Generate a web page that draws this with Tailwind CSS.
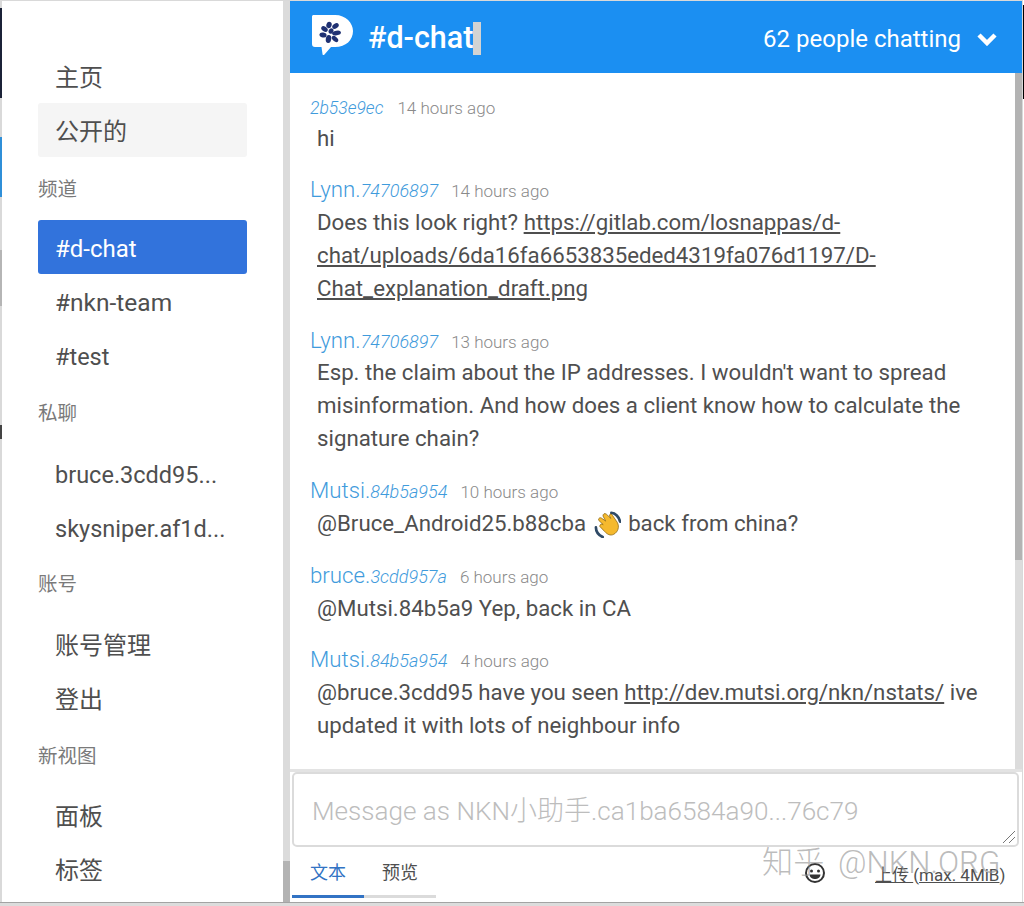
<!DOCTYPE html>
<html lang="zh">
<head>
<meta charset="utf-8">
<title>D-Chat</title>
<script src="https://cdn.jsdelivr.net/npm/@tailwindcss/browser@4"></script>
</head>
<body class="m-0 h-[906px] w-[1024px] overflow-hidden bg-[#d9d9d9] font-['Roboto','Noto_Sans_CJK_SC',sans-serif] text-[#4f4f4f]">
<div class="relative flex h-[906px] w-[1024px] pt-px pb-[4px]">
  <aside class="ml-[2px] h-full w-[281px] shrink-0 bg-white pl-[36px] pt-[48px]">
    <ul class="w-[209px] text-[24px] leading-[58px]">
      <li class="h-[54px] pl-[17px]">主页</li>
      <li class="h-[54px] rounded-[3px] bg-[#f5f5f5] pl-[17px]">公开的</li>
    </ul>
    <p class="mt-[19px] h-[27px] text-[19.500px] leading-[27px] text-[#7a7a7a]">频道</p>
    <ul class="mt-[17px] w-[209px] text-[24px] leading-[58px]">
      <li class="h-[54px] rounded-[3px] bg-[#3273dc] pl-[17px] text-white">#d-chat</li>
      <li class="h-[54px] pl-[17px] text-[24.500px]">#nkn-team</li>
      <li class="h-[54px] pl-[17px] text-[23.500px]">#test</li>
    </ul>
    <p class="mt-[18px] h-[27px] text-[19.500px] leading-[27px] text-[#7a7a7a]">私聊</p>
    <ul class="mt-[19px] w-[209px] text-[23.500px] leading-[58px]">
      <li class="h-[54px] pl-[17px]">bruce.3cdd95...</li>
      <li class="h-[54px] pl-[17px]">skysniper.af1d...</li>
    </ul>
    <p class="mt-[17px] h-[27px] text-[19.500px] leading-[27px] text-[#7a7a7a]">账号</p>
    <ul class="mt-[19px] w-[209px] text-[24px] leading-[58px]">
      <li class="h-[54px] pl-[17px]">账号管理</li>
      <li class="h-[54px] pl-[17px]">登出</li>
    </ul>
    <p class="mt-[18px] h-[27px] text-[19.500px] leading-[27px] text-[#7a7a7a]">新视图</p>
    <ul class="mt-[18px] w-[209px] text-[24px] leading-[58px]">
      <li class="h-[54px] pl-[17px]">面板</li>
      <li class="h-[54px] pl-[17px]">标签</li>
    </ul>
  </aside>

  <div class="relative w-[7px] shrink-0 bg-[#dbdbdb]">
    <div class="absolute inset-x-0 bottom-0 h-[41px] bg-[#b3b3b3]"></div>
  </div>

  <main class="mr-[2px] flex h-full min-w-0 flex-1 flex-col bg-white">
    <header class="flex h-[72px] shrink-0 items-center bg-[#1b8ff2] pl-[21px] pr-[25px] pt-[3px] text-white">
      <svg class="mb-[8px] mr-[14px] h-[42px] w-[43px] shrink-0" viewBox="0 0 43 42" aria-hidden="true">
        <path d="M3 1 H24 C35 1 42 9 42 17 C42 26 35 33 24 33 H20 L13.500 40.500 C12.500 41.500 11.500 41 11.500 40 L10.500 33 H4 C2 33 1 32 1 30 V3 C1 1.500 1.500 1 3 1 Z" fill="#fff"/>
        <g fill="#1f3173">
          <ellipse cx="18" cy="11" rx="2.600" ry="3.200" transform="rotate(20 18 11)"/>
          <ellipse cx="24.500" cy="12" rx="2.300" ry="3.600" transform="rotate(55 24.500 12)"/>
          <ellipse cx="13.500" cy="15" rx="2.300" ry="3.600" transform="rotate(-55 13.500 15)"/>
          <ellipse cx="20" cy="17" rx="2.300" ry="2.800" transform="rotate(30 20 17)"/>
          <ellipse cx="12" cy="21" rx="2.500" ry="3.600" transform="rotate(-80 12 21)"/>
          <ellipse cx="25.500" cy="19" rx="2.300" ry="4.500" transform="rotate(80 25.500 19)"/>
          <ellipse cx="17.500" cy="25" rx="2.700" ry="4" transform="rotate(10 17.500 25)"/>
          <ellipse cx="24" cy="25" rx="2.200" ry="3.800" transform="rotate(-50 24 25)"/>
        </g>
      </svg>
      <h1 class="flex items-center text-[30.500px] font-medium leading-none"><span>#d-chat</span><span class="h-[33px] w-[8px] bg-[#d3d3d3]"></span></h1>
      <span class="ml-auto text-[24px]">62 people chatting</span>
      <svg class="ml-[16px] h-[14px] w-[20px]" viewBox="0 0 20 14" aria-hidden="true"><path d="M2 3 L10 11 L18 3" fill="none" stroke="#fff" stroke-width="4.500"/></svg>
    </header>

    <div class="flex min-h-0 flex-1 pl-[20px]">
      <div class="min-w-0 flex-1 pt-[20px] pr-[10px]">
        <article>
          <div class="flex h-[29px] items-baseline leading-[30px]"><span class="text-[17.500px] font-light italic text-[#3f9bdc]">2b53e9ec</span><span class="ml-[14px] text-[17px] font-light text-[#8a8a8a]">14 hours ago</span></div>
          <p class="pl-[7px] text-[22.250px] leading-[33px]">hi</p>
        </article>
        <article class="mt-[20px]">
          <div class="flex h-[31px] items-baseline leading-[28px]"><span class="text-[22.250px] font-light text-[#3f9bdc]">Lynn.</span><span class="text-[18px] font-light italic text-[#3f9bdc]">74706897</span><span class="ml-[13px] text-[17px] font-light text-[#8a8a8a]">14 hours ago</span></div>
          <p class="pl-[7px] text-[22.250px] leading-[33px]">Does this look right? <a class="underline" href="#">https://gitlab.com/losnappas/d-chat/uploads/6da16fa6653835eded4319fa076d1197/D-Chat_explanation_draft.png</a></p>
        </article>
        <article class="mt-[21px]">
          <div class="flex h-[30px] items-baseline leading-[28px]"><span class="text-[22.250px] font-light text-[#3f9bdc]">Lynn.</span><span class="text-[18px] font-light italic text-[#3f9bdc]">74706897</span><span class="ml-[13px] text-[17px] font-light text-[#8a8a8a]">13 hours ago</span></div>
          <p class="pl-[7px] text-[22.250px] leading-[33px]">Esp. the claim about the IP addresses. I wouldn't want to spread misinformation. And how does a client know how to calculate the signature chain?</p>
        </article>
        <article class="mt-[21px]">
          <div class="flex h-[31px] items-baseline leading-[28px]"><span class="text-[22.250px] font-light text-[#3f9bdc]">Mutsi.</span><span class="text-[18px] font-light italic text-[#3f9bdc]">84b5a954</span><span class="ml-[13px] text-[17px] font-light text-[#8a8a8a]">10 hours ago</span></div>
          <p class="pl-[7px] text-[22.250px] leading-[33px]">@Bruce_Android25.b88cba <svg class="mx-[2px] inline-block h-[27px] w-[27px] align-[-7px]" viewBox="0 0 28 28" aria-hidden="true"><path d="M2 17 C2 22 5 25 9 27 M18 2 C22 2 26 6 27 11" fill="none" stroke="#2f4a66" stroke-width="2.800" stroke-linecap="round"/><g transform="rotate(-28 14 14)"><path d="M6 12 C7 10 9 10 10 12 L8 6 C8 4 11 3 12 6 L14 10 L14 4 C15 2 17 2 18 4 L20 10 L20 7 C21 5 23 6 23 8 L24 17 C24 22 20 26 15 26 C11 26 9 23 8 19 Z" fill="#f5b92e" stroke="#8a6510" stroke-width=".7"/></g></svg> back from china?</p>
        </article>
        <article class="mt-[21px]">
          <div class="flex h-[31px] items-baseline leading-[28px]"><span class="text-[22.250px] font-light text-[#3f9bdc]">bruce.</span><span class="text-[18px] font-light italic text-[#3f9bdc]">3cdd957a</span><span class="ml-[13px] text-[17px] font-light text-[#8a8a8a]">6 hours ago</span></div>
          <p class="pl-[7px] text-[22.250px] leading-[33px]">@Mutsi.84b5a9 Yep, back in CA</p>
        </article>
        <article class="mt-[20px]">
          <div class="flex h-[31px] items-baseline leading-[28px]"><span class="text-[22.250px] font-light text-[#3f9bdc]">Mutsi.</span><span class="text-[18px] font-light italic text-[#3f9bdc]">84b5a954</span><span class="ml-[13px] text-[17px] font-light text-[#8a8a8a]">4 hours ago</span></div>
          <p class="pl-[7px] text-[22.250px] leading-[33px]">@bruce.3cdd95 have you seen <a class="underline" href="#">http://dev.mutsi.org/nkn/nstats/</a> ive updated it with lots of neighbour info</p>
        </article>
      </div>
      <div class="relative h-full w-[7px] shrink-0 bg-[#dcdcdc]">
        <div class="absolute inset-x-0 top-0 h-[487px] bg-[#b3b3b3]"></div>
      </div>
    </div>

    <div class="shrink-0 border-t-[3px] border-[#e3e3e3] pl-[2px] pr-[3px]">
      <div class="relative h-[75px] rounded-[5px] border-2 border-[#dbdbdb] pl-[18px] pt-[21px] text-[26.100px] font-light leading-[33px] text-[#bdbdbd]">
        Message as NKN<span class="text-[27px]">小助手</span>.ca1ba6584a90...76c79
        <svg class="absolute bottom-[1px] right-[1px] h-[14px] w-[14px]" viewBox="0 0 14 14" aria-hidden="true"><path d="M1 13 L13 1 M7 13 L13 7" stroke="#777" stroke-width="1"/></svg>
      </div>
      <div class="flex h-[55px] items-start">
        <div class="flex h-[51px] w-[144px] items-stretch border-b-[3px] border-[#dbdbdb] text-[18px]">
          <span class="-mb-[3px] flex w-[72px] items-center justify-center border-b-[3px] border-[#3273c4] pt-[3px] text-[#3273c4]">文本</span>
          <span class="flex w-[72px] items-center justify-center pt-[3px]">预览</span>
        </div>
        <svg class="ml-[368px] mt-[15px] h-[22px] w-[22px]" viewBox="0 0 22 22" aria-hidden="true"><circle cx="11" cy="11" r="9" fill="none" stroke="#333" stroke-width="2"/><circle cx="7.500" cy="9" r="1.500" fill="#333"/><circle cx="14.500" cy="9" r="1.500" fill="#333"/><path d="M5.500 12.500 H16.500 C16 16 13.500 17 11 17 C8.500 17 6 16 5.500 12.500 Z" fill="#333"/></svg>
        <span class="ml-[49px] mt-[16px] whitespace-nowrap text-[17px] leading-[25px]"><a class="underline" href="#">上传 </a><span>(</span><a class="underline" href="#">max. 4MiB</a><span>)</span></span>
      </div>
    </div>
  </main>

  <div class="pointer-events-none absolute left-[762px] top-[843px] whitespace-nowrap text-[31.200px] font-light leading-[40px] text-[#8f8f8f]/60">知乎<span class="ml-[6px]"> @NKN.ORG</span></div>

  <div class="absolute inset-x-0 bottom-0 h-[4px] border-t border-[#a3a3a3] bg-[#dcdcdc]"></div>
  <div class="absolute left-0 top-[8px] h-[90px] w-[2px] bg-[#1b2238]"></div>
  <div class="absolute left-0 top-[137px] h-[60px] w-[2px] bg-[#2f8fd8]"></div>
  <div class="absolute left-0 top-[250px] h-[56px] w-[2px] bg-[#b5b5b5]"></div>
  <div class="absolute left-0 top-[425px] h-[14px] w-[2px] bg-[#444]"></div>
  <div class="absolute right-0 top-0 h-[902px] w-px bg-white"></div>
  <div class="absolute right-0 top-[5px] h-[94px] w-px bg-black"></div>
</div>
</body>
</html>
